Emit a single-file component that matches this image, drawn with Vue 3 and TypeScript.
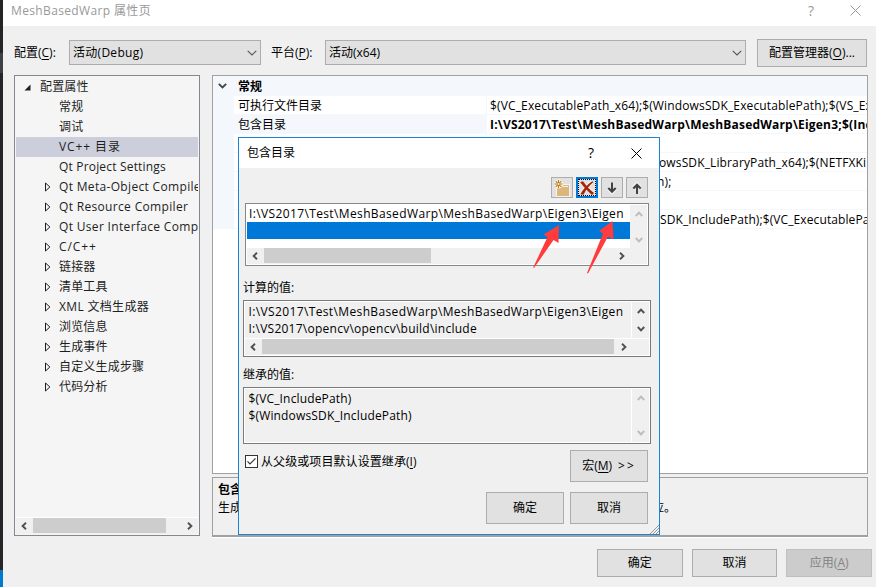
<script setup lang="ts">
interface TreeItem {
  label: string
  level: number
  state: 'open' | 'closed' | 'leaf'
  selected?: boolean
  tone?: string
}

interface PropertyRow {
  name: string
  value: string
  tone?: string
  current?: boolean
}

const tree: TreeItem[] = [
  { label: '配置属性', level: 0, state: 'open' },
  { label: '常规', level: 1, state: 'leaf' },
  { label: '调试', level: 1, state: 'leaf' },
  { label: 'VC++ 目录', level: 1, state: 'leaf', selected: true, tone: 'loose' },
  { label: 'Qt Project Settings', level: 1, state: 'leaf' },
  { label: 'Qt Meta-Object Compiler', level: 1, state: 'closed', tone: 'mid' },
  { label: 'Qt Resource Compiler', level: 1, state: 'closed', tone: 'mid' },
  { label: 'Qt User Interface Compiler', level: 1, state: 'closed', tone: 'mid' },
  { label: 'C/C++', level: 1, state: 'closed', tone: 'loose' },
  { label: '链接器', level: 1, state: 'closed' },
  { label: '清单工具', level: 1, state: 'closed' },
  { label: 'XML 文档生成器', level: 1, state: 'closed', tone: 'mid' },
  { label: '浏览信息', level: 1, state: 'closed' },
  { label: '生成事件', level: 1, state: 'closed' },
  { label: '自定义生成步骤', level: 1, state: 'closed' },
  { label: '代码分析', level: 1, state: 'closed' },
]

const rows: PropertyRow[] = [
  { name: '可执行文件目录', value: '$(VC_ExecutablePath_x64);$(WindowsSDK_ExecutablePath);$(VS_Ex' },
  { name: '包含目录', value: 'I:\\VS2017\\Test\\MeshBasedWarp\\MeshBasedWarp\\Eigen3;$(Inc', tone: 'bold', current: true },
  { name: '', value: '' },
  { name: '', value: 'owsSDK_LibraryPath_x64);$(NETFXKi', tone: 'tail' },
  { name: '', value: 'n);', tone: 'tail short' },
  { name: '', value: '' },
  { name: '', value: 'SDK_IncludePath);$(VC_ExecutablePat', tone: 'tail sdk' },
]
</script>

<template>
  <div class="screen">
    <div class="behind"><span class="behind-mark"></span><span class="behind-status"></span></div>

    <div class="window">
      <header class="titlebar">
        <span class="title">MeshBasedWarp 属性页</span>
        <span class="help">?</span>
        <svg class="close" width="11" height="11" viewBox="0 0 11 11"><path d="M.5 .5l10 10M10.5 .5l-10 10" /></svg>
      </header>

      <div class="config">
        <span class="cfg-label">配置(<u>C</u>):</span>
        <div class="select first"><span class="mid">活动(Debug)</span>
          <svg width="10" height="6" viewBox="0 0 10 6"><path d="M.7 .8L5 5L9.3 .8" /></svg>
        </div>
        <span class="cfg-label second">平台(<u>P</u>):</span>
        <div class="select platform"><span>活动(x64)</span>
          <svg width="10" height="6" viewBox="0 0 10 6"><path d="M.7 .8L5 5L9.3 .8" /></svg>
        </div>
        <button class="btn manager">配置管理器(<u>O</u>)...</button>
      </div>

      <main class="body">
        <nav class="tree">
          <ul>
            <li v-for="item in tree" :key="item.label" :class="['lvl' + item.level, { selected: item.selected }]">
              <span class="twisty">
                <svg v-if="item.state === 'open'" width="7" height="7" viewBox="0 0 7 7"><path class="solid" d="M6.5 .5V6.5H.5z" /></svg>
                <svg v-else-if="item.state === 'closed'" width="6" height="10" viewBox="0 0 6 10"><path class="hollow" d="M.5 1v8L4.9 5z" /></svg>
              </span>
              <span :class="['node', item.tone]">{{ item.label }}</span>
            </li>
          </ul>
          <div class="hbar tree-bar">
            <svg class="arr" width="6" height="8" viewBox="0 0 6 8"><path d="M5 .8L1.6 4L5 7.2" /></svg>
            <span class="thumb"></span>
            <svg class="arr" width="6" height="8" viewBox="0 0 6 8"><path d="M1 .8L4.4 4L1 7.2" /></svg>
          </div>
        </nav>

        <section class="right">
          <div class="grid">
            <div class="category">
              <svg width="9" height="6" viewBox="0 0 9 6"><path d="M.8 .8L4.5 4.5L8.2 .8" /></svg>
              <b>常规</b>
            </div>
            <div v-for="(row, i) in rows" :key="i" :class="['prop', { current: row.current }]">
              <span class="gutter"></span>
              <span class="name">{{ row.name }}</span>
              <span :class="['value', row.tone]">{{ row.value }}</span>
            </div>
          </div>
          <div class="desc">
            <b>包含</b>
            <p><span>生成</span><span class="desc-end">应。</span></p>
          </div>
        </section>
      </main>

      <footer class="footer">
        <button class="btn">确定</button>
        <button class="btn">取消</button>
        <button class="btn disabled">应用(<u>A</u>)</button>
      </footer>
    </div>

    <div class="dialog">
      <header class="dlg-title">
        <span>包含目录</span>
        <span class="help">?</span>
        <svg class="close" width="11" height="11" viewBox="0 0 11 11"><path d="M.5 .5l10 10M10.5 .5l-10 10" /></svg>
      </header>

      <div class="toolbar">
        <button class="tool">
          <svg width="18" height="18" viewBox="0 0 18 18">
            <path d="M3 7h5l1-2h8v13H3z" fill="#f7f3ea" />
            <path d="M4 8h5l1.500-2H16v11H4z" fill="#dcb67a" />
            <path d="M10 7.500h5" stroke="#f7f3ea" stroke-width="1" />
            <circle cx="5.500" cy="5" r="4.500" fill="#f5f2ec" />
            <path d="M5.500 1v8M1.500 5h8M2.700 2.200l5.600 5.600M8.300 2.200L2.700 7.800" stroke="#c27d1a" stroke-width="1.100" />
            <circle cx="5.500" cy="5" r="1" fill="#f5f2ec" />
          </svg>
        </button>
        <button class="tool focused">
          <svg width="16" height="16" viewBox="0 0 16 16">
            <path d="M2.500 2.500C6 6 10 10 14 13M13 2C9 5 5 9 2.500 14" stroke="#f7f2ee" stroke-width="4" fill="none" />
            <path d="M1.200 2.200L4 1.200C7 5.300 10.500 9.600 15 13L13 14.900C9 11.800 5 7.300 1.200 2.200zM13.300 1.200L14.500 2.100C10.300 5.500 7 9.500 4.500 14.800L1.300 14.300C4 9 8.500 4.200 13.300 1.200z" fill="#a5260c" />
          </svg>
        </button>
        <button class="tool">
          <svg width="14" height="14" viewBox="0 0 14 14">
            <path d="M7 1.500v9M3.500 7.200L7 10.700l3.500-3.500" stroke="#f6f6f6" stroke-width="4.500" fill="none" />
            <path d="M7 1.500v9M3.300 7L7 10.700L10.700 7" stroke="#424242" stroke-width="2.200" fill="none" />
          </svg>
        </button>
        <button class="tool">
          <svg width="14" height="14" viewBox="0 0 14 14">
            <path d="M7 13V4M3.500 7.300L7 3.800l3.500 3.500" stroke="#f6f6f6" stroke-width="4.500" fill="none" />
            <path d="M7 13V4M3.300 7.500L7 3.800l3.700 3.700" stroke="#424242" stroke-width="2.200" fill="none" />
          </svg>
        </button>
      </div>

      <div class="list edit">
        <div class="pane">
          <div class="line">I:\VS2017\Test\MeshBasedWarp\MeshBasedWarp\Eigen3\Eigen</div>
          <div class="line active"></div>
        </div>
        <div class="vbar pale">
          <svg class="arr" width="8" height="6" viewBox="0 0 8 6"><path d="M.8 5L4 1.600L7.200 5" /></svg>
          <svg class="arr" width="8" height="6" viewBox="0 0 8 6"><path d="M.8 1L4 4.400L7.200 1" /></svg>
        </div>
        <div class="hbar">
          <svg class="arr" width="6" height="8" viewBox="0 0 6 8"><path d="M5 .8L1.600 4L5 7.200" /></svg>
          <span class="thumb"></span>
          <svg class="arr" width="6" height="8" viewBox="0 0 6 8"><path d="M1 .8L4.400 4L1 7.200" /></svg>
        </div>
        <svg class="pointers" width="90" height="60" viewBox="0 0 90 60">
          <path d="M29 5L28.500 23L23.500 20L4 48L3.200 47.500L17.500 17L13.500 14.500z" />
          <path d="M82.500 1L83.500 19.500L78 16.500L58 53.500L57 53L73 13.500L69 11z" />
        </svg>
      </div>

      <div class="caption calc">计算的值:</div>
      <div class="list computed">
        <div class="pane">
          <div class="line">I:\VS2017\Test\MeshBasedWarp\MeshBasedWarp\Eigen3\Eigen</div>
          <div class="line mid">I:\VS2017\opencv\opencv\build\include</div>
        </div>
        <div class="vbar">
          <svg class="arr" width="8" height="6" viewBox="0 0 8 6"><path d="M.8 5L4 1.600L7.200 5" /></svg>
          <svg class="arr" width="8" height="6" viewBox="0 0 8 6"><path d="M.8 1L4 4.400L7.200 1" /></svg>
        </div>
        <div class="hbar">
          <svg class="arr" width="6" height="8" viewBox="0 0 6 8"><path d="M5 .8L1.600 4L5 7.200" /></svg>
          <span class="thumb"></span>
          <svg class="arr" width="6" height="8" viewBox="0 0 6 8"><path d="M1 .8L4.400 4L1 7.200" /></svg>
        </div>
      </div>

      <div class="caption inherit">继承的值:</div>
      <div class="list inherited">
        <div class="pane">
          <div class="line">$(VC_IncludePath)</div>
          <div class="line">$(WindowsSDK_IncludePath)</div>
        </div>
        <div class="vbar pale">
          <svg class="arr" width="8" height="6" viewBox="0 0 8 6"><path d="M.8 5L4 1.600L7.200 5" /></svg>
          <svg class="arr" width="8" height="6" viewBox="0 0 8 6"><path d="M.8 1L4 4.400L7.200 1" /></svg>
        </div>
      </div>

      <div class="options">
        <label class="check">
          <svg width="13" height="13" viewBox="0 0 13 13">
            <rect x=".5" y=".5" width="12" height="12" fill="#fff" stroke="#333" />
            <path d="M2.500 6.300L5 9L10.500 3.300" fill="none" stroke="#333" stroke-width="1.200" />
          </svg>
          <span>从父级或项目默认设置继承(<u>I</u>)</span>
        </label>
        <button class="btn macro">宏(<u>M</u>)<span class="more">&gt;&gt;</span></button>
      </div>
      <div class="dlg-actions">
        <button class="btn">确定</button>
        <button class="btn">取消</button>
      </div>
      <svg class="grip" width="9" height="9" viewBox="0 0 9 9"><path d="M0 9L9 0M3 9L9 3M6 9L9 6" /></svg>
    </div>
  </div>
</template>

<style>
body {
  margin: 0;
  overflow: hidden;
}
</style>

<style scoped>
* {
  box-sizing: border-box;
}
.screen {
  position: relative;
  display: flex;
  width: 876px;
  height: 587px;
  overflow: hidden;
  background: #f0f0f0;
  color: #000;
  font: 12px/16px "Open Sans", "Noto Sans CJK SC", sans-serif;
  white-space: pre;
}
ul, p {
  margin: 0;
  padding: 0;
  list-style: none;
}
u {
  text-decoration-thickness: 1px;
  text-underline-offset: 2px;
}
svg {
  display: block;
  flex: none;
}
.behind {
  display: flex;
  flex-direction: column;
  justify-content: space-between;
  width: 3px;
  padding-top: 53px;
  background: #252528;
}
.behind-mark {
  height: 20px;
  background: #3f3f46;
}
.behind-status {
  height: 17px;
  background: #007acc;
}
.window {
  display: flex;
  flex-direction: column;
  width: 873px;
}

/* main window title and configuration bar */
.titlebar {
  display: flex;
  align-items: center;
  height: 26px;
  padding: 0 15px 5px 8px;
  background: #fff;
  color: #999;
}
.title {
  letter-spacing: .36px;
}
.help {
  margin-left: auto;
  font-size: 14px;
}
.titlebar .help {
  margin-right: 36px;
}
.close {
  fill: none;
  stroke: currentColor;
}
.config {
  display: flex;
  align-items: center;
  height: 49px;
  padding: 4px 9px 0 11px;
}
.cfg-label {
  width: 55px;
}
.cfg-label.second {
  width: 54px;
  margin-left: 10px;
}
.select {
  display: flex;
  align-items: center;
  justify-content: space-between;
  height: 25px;
  padding: 0 3px;
  border: 1px solid #adadad;
  background: #e1e1e1;
}
.select svg {
  fill: none;
  stroke: #555;
  stroke-width: 1.1;
}
.first {
  width: 192px;
}
.platform {
  width: 421px;
}
.btn {
  height: 28px;
  padding: 0;
  border: 1px solid #adadad;
  border-radius: 0;
  background: #e1e1e1;
  color: #000;
  font: inherit;
  white-space: pre;
}
.manager {
  width: 110px;
  margin-left: 11px;
}
.mid {
  letter-spacing: .28px;
}
.loose {
  letter-spacing: .9px;
}

/* navigation tree */
.body {
  display: flex;
  gap: 12px;
  height: 463px;
  padding-left: 11px;
}
.tree {
  display: flex;
  flex-direction: column;
  justify-content: space-between;
  width: 186px;
  height: 461px;
  padding: 1px;
  border: 1px solid #828790;
  background: #f5f5f5;
}
.tree ul {
  overflow: hidden;
}
.tree li {
  display: flex;
  align-items: center;
  height: 20px;
  color: #1e1e1e;
}
.tree li.selected {
  background: #cccedb;
}
.twisty {
  display: flex;
  flex: none;
  justify-content: flex-end;
  width: 15px;
  margin-right: 9px;
}
.lvl1 .twisty {
  width: 35px;
  margin-right: 8px;
}
.node {
  letter-spacing: .18px;
}
.node.mid {
  letter-spacing: .33px;
}
.node.loose {
  letter-spacing: .9px;
}
.solid {
  fill: #1e1e1e;
}
.hollow {
  fill: none;
  stroke: #1e1e1e;
}

/* scrollbars */
.hbar {
  display: flex;
  align-items: center;
  background: #f0f0f0;
}
.thumb {
  background: #cdcdcd;
}
.arr {
  fill: none;
  stroke: #505050;
  stroke-width: 1.9;
}
.pale .arr {
  stroke: #bcbcbc;
}
.tree-bar {
  height: 17px;
  padding: 0 5px 1px;
  border-top: 1px solid #fff;
}
.tree-bar .thumb {
  width: 133px;
  height: 15px;
  margin: 0 auto 0 6px;
}

/* property grid */
.right {
  width: 656px;
}
.grid {
  height: 399px;
  border: 1px solid #a0a0a0;
  background: #fff;
  overflow: hidden;
}
.category {
  display: flex;
  align-items: center;
  gap: 11px;
  height: 20px;
  padding-left: 5px;
  background: #f4f7fc;
}
.category b {
  padding-top: 2px;
}
.category svg {
  fill: none;
  stroke: #444;
  stroke-width: 1.8;
}
.prop {
  display: flex;
  height: 19px;
  line-height: 20px;
}
.gutter {
  width: 21px;
  background: #f4f7fc;
}
.name {
  width: 253px;
  padding-left: 4px;
  border-right: 1px solid #f4f7fc;
  border-bottom: 1px solid #f4f7fc;
}
.current .name {
  background: #f4f7fc;
}
.value {
  flex: 1;
  min-width: 0;
  padding-left: 3px;
  border-bottom: 1px solid #f4f7fc;
  overflow: hidden;
  letter-spacing: .14px;
}
.value.bold {
  font-weight: 700;
  letter-spacing: .2px;
}
.value.tail {
  padding-left: 172px;
  letter-spacing: .13px;
}
.value.short {
  padding-left: 170px;
}
.value.sdk {
  padding-left: 173px;
  letter-spacing: .1px;
}
.desc {
  height: 60px;
  margin-top: 3px;
  padding: 3px 5px;
  border: 1px solid #a0a0a0;
  border-bottom-width: 2px;
  box-shadow: 0 1px #fff;
}
.desc b {
  line-height: 17px;
}
.desc p {
  display: flex;
  gap: 410px;
  line-height: 20px;
}
.footer {
  display: flex;
  gap: 9px;
  padding: 11px 4px 0 594px;
}
.footer .btn {
  flex: 1;
}
.footer .btn.disabled {
  border-color: #bfbfbf;
  background: #ccc;
  color: #838383;
}

/* include directories dialog */
.dialog {
  position: absolute;
  left: 238px;
  top: 137px;
  display: flex;
  flex-direction: column;
  width: 422px;
  height: 398px;
  border: 1px solid #1883d7;
  background: #f0f0f0;
}
.dlg-title {
  display: flex;
  flex: none;
  align-items: center;
  height: 30px;
  padding: 0 17px 0 8px;
  background: #fff;
}
.dlg-title .help {
  margin-right: 37px;
}
.toolbar {
  display: flex;
  justify-content: flex-end;
  gap: 3px;
  padding: 9px 11px 0 0;
}
.tool {
  display: flex;
  align-items: center;
  justify-content: center;
  width: 22px;
  height: 21px;
  padding: 0;
  border: 1px solid #adadad;
  border-radius: 0;
  background: #e1e1e1;
}
.tool.focused {
  border: 2px solid #0078d7;
  outline: 1px dotted #000;
  outline-offset: -3px;
}
.list {
  display: grid;
  grid-template-columns: 1fr 17px;
  border: 1px solid #7a7a7a;
}
.pane {
  overflow: hidden;
}
.line {
  height: 17px;
  padding-left: 2px;
  line-height: 17px;
  letter-spacing: .37px;
}
.line.mid {
  letter-spacing: .25px;
}
.active {
  background: #0078d7;
}
.vbar {
  display: flex;
  flex-direction: column;
  align-items: center;
  justify-content: space-between;
  background: #f0f0f0;
}
.edit {
  position: relative;
  grid-template-rows: 43px 15px;
  width: 404px;
  height: 63px;
  margin: 5px 0 0 6px;
  padding: 1px 1px 2px 1px;
  border-color: #828790;
  background: #fff;
}
.edit .pane {
  padding-right: 0;
}
.edit .vbar {
  padding: 6px 0 5px;
}
.edit .hbar {
  grid-column: 1 / 3;
  padding: 0 22px 0 5px;
  box-shadow: 0 1px #f0f0f0;
}
.list .thumb {
  height: 15px;
  margin: 0 auto 0 6px;
}
.edit .thumb {
  width: 167px;
}
.pointers {
  position: absolute;
  left: 284px;
  top: 16px;
  fill: #ff3b3b;
}
.caption {
  padding-left: 4px;
  line-height: 16px;
}
.calc {
  margin-top: 14px;
}
.computed, .inherited {
  width: 408px;
  height: 57px;
  margin-left: 4px;
  padding: 1px;
  box-shadow: inset 0 0 0 1px #fff;
}
.computed {
  grid-template-rows: 36px 16px;
  margin-top: 4px;
}
.computed .pane, .inherited .pane {
  padding: 1px 0 0 1px;
  border-right: 1px solid #fff;
}
.computed .line {
  padding-left: 2.5px;
}
.computed .vbar {
  padding: 6px 0;
}
.computed .hbar {
  grid-column: 1 / 3;
  padding: 0 22px 0 5px;
  border-top: 1px solid #fff;
}
.computed .thumb {
  width: 352px;
}
.inherit {
  margin-top: 10px;
}
.inherited {
  margin-top: 4px;
}
.inherited .line {
  padding-left: 2.5px;
  letter-spacing: .15px;
}
.inherited .vbar {
  padding: 6px 0;
}
.options {
  display: flex;
  justify-content: space-between;
  padding: 6px 11px 0 6px;
}
.check {
  display: flex;
  gap: 3px;
  padding-top: 5px;
  height: 22px;
  line-height: 14px;
  letter-spacing: .08px;
}
.macro, .dlg-actions .btn {
  width: 78px;
  height: 32px;
}
.more {
  margin-left: 6px;
  letter-spacing: 2px;
}
.dlg-actions {
  display: flex;
  justify-content: flex-end;
  gap: 6px;
  padding: 10px 11px 0 0;
}
.grip {
  position: absolute;
  right: 0;
  bottom: 0;
  fill: none;
  stroke: #999;
}
</style>
